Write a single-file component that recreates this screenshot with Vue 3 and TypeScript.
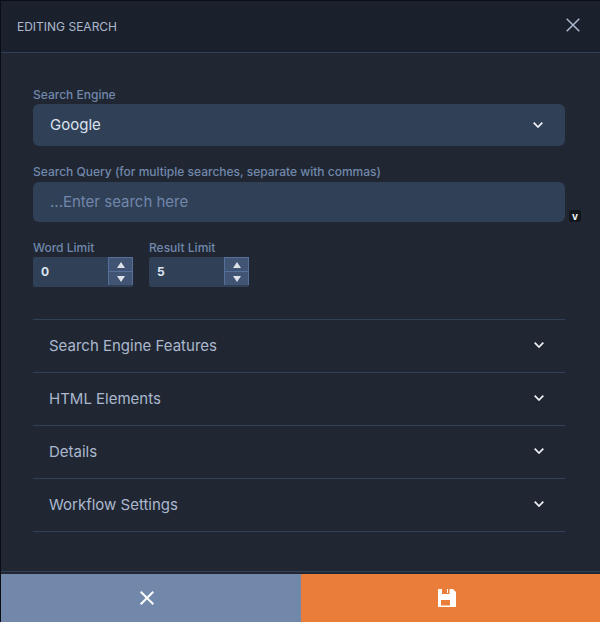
<script setup lang="ts">
import { ref } from 'vue'

interface Limit {
  id: string
  label: string
  value: number
}

const engine = ref('Google')
const engines: string[] = ['Google', 'Bing', 'DuckDuckGo']
const query = ref('')
const limits = ref<Limit[]>([
  { id: 'word-limit', label: 'Word Limit', value: 0 },
  { id: 'result-limit', label: 'Result Limit', value: 5 },
])
const sections: string[] = ['Search Engine Features', 'HTML Elements', 'Details', 'Workflow Settings']

function step(limit: Limit, delta: number): void {
  limit.value = Math.max(0, limit.value + delta)
}
</script>

<template>
  <form class="dialog" @submit.prevent>
    <header class="header">
      <h1 class="title">EDITING SEARCH</h1>
      <button class="close" type="button" aria-label="Close">
        <svg width="14" height="14" viewBox="0 0 14 14"><path d="M.7.7l12.600 12.600M13.300.7L.7 13.300" /></svg>
      </button>
    </header>

    <main class="body">
      <div class="field">
        <label class="label" for="engine">Search Engine</label>
        <div class="select-wrap">
          <select id="engine" v-model="engine" class="control select">
            <option v-for="name in engines" :key="name">{{ name }}</option>
          </select>
          <svg class="chevron select-chevron" width="10" height="6" viewBox="0 0 10 6"><path d="M.7.7L5 5 9.3.7" /></svg>
        </div>
      </div>

      <div class="field">
        <label class="label" for="query">Search Query (for multiple searches, separate with commas)</label>
        <div class="query-wrap">
          <input id="query" v-model="query" class="control query" type="text" placeholder="...Enter search here" />
          <button class="variable" type="button">v</button>
        </div>
      </div>

      <div class="limits">
        <div v-for="limit in limits" :key="limit.id" class="limit">
          <label class="label" :for="limit.id">{{ limit.label }}</label>
          <div class="number">
            <input :id="limit.id" v-model.number="limit.value" class="number-input" type="number" min="0" />
            <div class="stepper">
              <button class="step" type="button" aria-label="Increase" @click="step(limit, 1)">
                <svg width="8" height="6" viewBox="0 0 8 6"><path d="M4 0l4 6H0z" /></svg>
              </button>
              <button class="step" type="button" aria-label="Decrease" @click="step(limit, -1)">
                <svg width="8" height="6" viewBox="0 0 8 6"><path d="M0 0h8L4 6z" /></svg>
              </button>
            </div>
          </div>
        </div>
      </div>

      <div class="sections">
        <button v-for="name in sections" :key="name" class="section" type="button">
          <span>{{ name }}</span>
          <svg class="chevron" width="10" height="6" viewBox="0 0 10 6"><path d="M.7.7L5 5 9.3.7" /></svg>
        </button>
      </div>
    </main>

    <footer class="footer">
      <button class="action cancel" type="button" aria-label="Cancel">
        <svg width="14" height="14" viewBox="0 0 14 14"><path d="M.7.7l12.6 12.6M13.3.7L.7 13.3" /></svg>
      </button>
      <button class="action save" type="submit" aria-label="Save">
        <svg width="18" height="18" viewBox="0 0 18 18">
          <path
            fill-rule="evenodd"
            d="M.5 0H4v5h7.500V0H15l3 3v14.500l-.5.500H.5l-.5-.500V.5zM3 11v5.500h9V11z"
          />
          <path class="shutter" d="M9.500 0v4" />
        </svg>
      </button>
    </footer>
  </form>
</template>

<style>
body {
  background: #202733;
}
</style>

<style scoped>
.dialog,
.dialog * {
  box-sizing: border-box;
}

.dialog {
  display: flex;
  flex-direction: column;
  min-height: 100vh;
  border-top: 1px solid #0a0d13;
  border-left: 1px solid #0a0d13;
  background: #202733;
  color: #abb8ce;
  font-family: Inter, "Liberation Sans", sans-serif;
}

button,
input,
select {
  margin: 0;
  padding: 0;
  border: 0;
  color: inherit;
  font-family: inherit;
}

button {
  cursor: pointer;
}

.header {
  display: flex;
  align-items: center;
  justify-content: space-between;
  height: 52px;
  padding: 0 16px;
  border-bottom: 1px solid #304058;
  background: #1b212c;
}

.title {
  margin: 0;
  font-size: 12px;
  font-weight: 400;
  line-height: 16px;
}

.close {
  display: flex;
  padding: 4px 4px 8px;
  background: none;
}

.close svg,
.cancel svg {
  fill: none;
  stroke: #abb8ce;
  stroke-width: 1.500;
}

.body {
  flex: 1;
  padding: 33px 35px 39px 32px;
}

.field {
  margin-bottom: 17px;
}

.label {
  display: block;
  color: #7187ab;
  font-size: 12px;
  font-weight: 500;
  line-height: 18px;
}

.control {
  display: block;
  width: 100%;
  padding: 0 17px 2px;
  border-radius: 6px;
  background: #304057;
  font-size: 15px;
}

.select-wrap {
  display: grid;
  align-items: center;
}

.select-wrap > * {
  grid-area: 1 / 1;
}

.select {
  height: 42px;
  appearance: none;
  color: #dce4f0;
}

.chevron {
  fill: none;
  stroke: #f0f3f8;
  stroke-width: 1.700;
}

.select-chevron {
  justify-self: end;
  margin-right: 22px;
  pointer-events: none;
}

.query-wrap {
  position: relative;
  padding-top: 1px;
}

.query {
  height: 40px;
}

.query::placeholder {
  color: #7187ab;
  opacity: 1;
}

.variable {
  position: absolute;
  bottom: 0;
  left: 100%;
  width: 12px;
  height: 12px;
  margin-left: 4px;
  border-radius: 2px;
  background: #12161d;
  color: #f0f3f8;
  font-size: 10px;
  font-weight: 700;
  line-height: 11px;
}

.limits {
  display: flex;
  gap: 16px;
  margin-bottom: 32px;
}

.limit {
  width: 100px;
}

.number {
  display: flex;
  height: 30px;
  border-radius: 2px;
  background: #304057;
}

.number-input {
  flex: 1;
  min-width: 0;
  padding: 0 0 2px 8px;
  background: none;
  color: #dce4f0;
  font-size: 12px;
  font-weight: 700;
  appearance: textfield;
}

.number-input::-webkit-inner-spin-button {
  appearance: none;
}

.stepper {
  display: flex;
  flex-direction: column;
  width: 25px;
  height: 28px;
  border: 1px solid #55709b;
  border-width: 1px 1px 0 1px;
}

.step {
  display: flex;
  flex: 1;
  align-items: center;
  justify-content: center;
  background: #415474;
}

.step + .step {
  border-top: 1px solid #55709b;
}

.step svg {
  fill: #dce1e8;
}

.sections {
  border-top: 1px solid #304058;
}

.section {
  display: flex;
  align-items: center;
  justify-content: space-between;
  width: 100%;
  height: 53px;
  padding: 0 21px 2px 16px;
  border-bottom: 1px solid #304058;
  background: none;
  font-size: 15px;
}

.footer {
  display: grid;
  grid-template-columns: 1fr 1fr;
  padding-top: 2px;
  border-top: 1px solid #304058;
}

.action {
  display: flex;
  align-items: center;
  justify-content: center;
  height: 48px;
  padding-right: 7px;
}

.cancel {
  background: #7288aa;
}

.cancel svg {
  stroke: #fff;
  stroke-width: 2;
}

.save {
  background: #e97d39;
}

.save svg {
  fill: #fff;
}

.shutter {
  stroke: #fff;
}
</style>
